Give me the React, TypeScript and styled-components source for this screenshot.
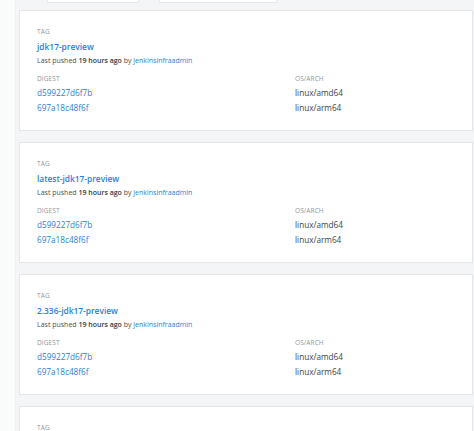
import { Fragment } from 'react';
import styled, { createGlobalStyle } from 'styled-components';

const GlobalStyle = createGlobalStyle`
  html, body {
    margin: 0;
    padding: 0;
    background: #f4f5f7;
    font-family: "Open Sans", "Liberation Sans", sans-serif;
    -webkit-font-smoothing: antialiased;
  }
`;

const Page = styled.div`
  display: flex;
  min-height: 431px;
`;

const Gutter = styled.div`
  width: 15px;
  flex-shrink: 0;
  background: #fafbfb;
  border-right: 1px solid #eff0f2;
`;

const Main = styled.main`
  flex: 1;
  padding: 0 1px 0 3px;
  overflow: hidden;
`;

const TabRow = styled.div`
  display: flex;
  gap: 20px;
  padding-left: 28px;
  height: 3px;
  margin-bottom: 7px;
`;

const Tab = styled.div<{ $w: number }>`
  width: ${({ $w }) => $w}px;
  height: 2px;
  background: #fff;
  border: 1px solid #e4e6ea;
  border-top: none;
`;

const List = styled.div`
  display: flex;
  flex-direction: column;
  gap: 11px;
`;

const Card = styled.section`
  background: #fff;
  border: 1px solid #e3e5e8;
  padding: 16px 17px 15px;
`;

const Label = styled.div`
  font-size: 6.5px;
  line-height: 10px;
  color: #8f959c;
  text-transform: uppercase;
  letter-spacing: 0.1px;
`;

const TagName = styled.a`
  display: block;
  margin-top: 3px;
  font-size: 8.4px;
  line-height: 13px;
  font-weight: 600;
  color: #2a7fd6;
  text-decoration: none;
`;

const Meta = styled.div`
  margin-top: 3px;
  font-size: 7px;
  line-height: 10px;
  color: #4a4f55;

  strong {
    font-weight: 600;
    color: #33373c;
  }

  a {
    color: #2a7fd6;
    text-decoration: none;
  }
`;

const Grid = styled.div`
  display: grid;
  grid-template-columns: 258px 1fr;
  margin-top: 8px;
`;

const HeadCell = styled(Label)`
  margin-bottom: 1px;
`;

const Digest = styled.a`
  display: block;
  font-size: 8.2px;
  line-height: 15px;
  color: #2a7fd6;
  text-decoration: none;
`;

const Arch = styled.div`
  font-size: 8.2px;
  line-height: 15px;
  color: #3d4248;
`;

type Image = { digest: string; arch: string };

const images: Image[] = [
  { digest: 'd599227d6f7b', arch: 'linux/amd64' },
  { digest: '697a18c48f6f', arch: 'linux/arm64' },
];

const tags = ['jdk17-preview', 'latest-jdk17-preview', '2.336-jdk17-preview'];

function TagCard({ name }: { name: string }) {
  return (
    <Card>
      <Label>Tag</Label>
      <TagName href="#">{name}</TagName>
      <Meta>
        Last pushed <strong>19 hours ago</strong> by <a href="#">jenkinsinfraadmin</a>
      </Meta>
      <Grid>
        <HeadCell>Digest</HeadCell>
        <HeadCell>OS/ARCH</HeadCell>
        {images.map((img) => (
          <Fragment key={img.digest}>
            <Digest href="#">{img.digest}</Digest>
            <Arch>{img.arch}</Arch>
          </Fragment>
        ))}
      </Grid>
    </Card>
  );
}

export default function App() {
  return (
    <>
      <GlobalStyle />
      <Page>
        <Gutter />
        <Main>
          <TabRow>
            <Tab $w={90} />
            <Tab $w={116} />
          </TabRow>
          <List>
            {tags.map((t) => (
              <TagCard key={t} name={t} />
            ))}
            <Card>
              <Label>Tag</Label>
            </Card>
          </List>
        </Main>
      </Page>
    </>
  );
}
